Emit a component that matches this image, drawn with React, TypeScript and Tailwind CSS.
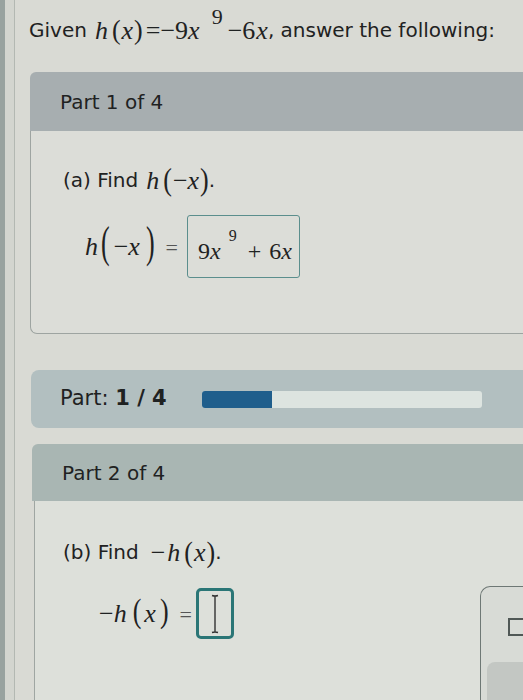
import React from "react";

const sans = { fontFamily: '"DejaVu Sans", Verdana, sans-serif' };
const serif = { fontFamily: '"Liberation Serif", "Times New Roman", serif' };

function V({ children }: { children: React.ReactNode }) {
  return <span className="italic">{children}</span>;
}

function Paren({
  children,
  cls,
  inner = "px-[1px]",
}: {
  children: React.ReactNode;
  cls: string;
  inner?: string;
}) {
  return (
    <span className="inline-flex items-baseline">
      <span className={`inline-block leading-none ${cls}`}>(</span>
      <span className={inner}>{children}</span>
      <span className={`inline-block leading-none ${cls}`}>)</span>
    </span>
  );
}

export default function App() {
  return (
    <div className="w-[523px] h-[700px] overflow-hidden flex bg-[#d9dad4] text-[#1f2222]" style={sans}>
      <div className="w-[5px] flex-none bg-[#98a29f]" />
      <div className="w-[9px] flex-none bg-[#d3d5cf]" />
      <div className="w-[1px] flex-none bg-[#b3b8b2]" />
      <div className="flex-1 flex flex-col min-w-0">
        {/* heading */}
        <div className="h-[72px] flex-none pt-[12px] pl-[14px] flex items-start">
          <div className="h-[36px] flex items-center whitespace-nowrap text-[20px]">
            <span>Given</span>
            <span className="ml-[8px] text-[26px] flex items-baseline" style={serif}>
              <V>h</V>
              <span className="ml-[4px]">
                <Paren cls="scale-y-[1.05]">
                  <V>x</V>
                </Paren>
              </span>
              <span className="ml-[3px]">=</span>
              <span>−9</span>
              <V>x</V>
              <span className="relative -top-[15px] text-[22px] ml-[12px]">9</span>
              <span className="ml-[5px]">−6</span>
              <span className="ml-[1px] italic">x</span>
            </span>
            <span>, answer the following:</span>
          </div>
        </div>

        {/* Part 1 header */}
        <div className="ml-[15px] h-[59px] flex-none bg-[#a7aeb0] rounded-tl-[6px] pl-[30px] flex items-center text-[20px]">
          Part 1 of 4
        </div>

        {/* Part 1 content */}
        <div className="ml-[15px] h-[203px] flex-none border-l border-b border-[#9ea4a1] rounded-bl-[7px] bg-[#dcddd8] pl-[32px]">
          <div className="pt-[34px] h-[64px] flex items-center text-[20px] whitespace-nowrap">
            <span>(a) Find</span>
            <span className="ml-[8px] text-[26px] flex items-baseline" style={serif}>
              <V>h</V>
              <span className="ml-[4px]">
                <Paren cls="scale-y-[1.2] -translate-y-[1px]">
                  −<V>x</V>
                </Paren>
              </span>
            </span>
            <span>.</span>
          </div>
          <div className="mt-[20px] ml-[22px] flex items-center text-[26px] whitespace-nowrap" style={serif}>
            <span className="flex items-baseline">
              <V>h</V>
              <span className="ml-[3px]">
                <Paren cls="scale-y-[1.7] -translate-y-[4px]" inner="pl-[4px] pr-[6px]">
                  −<V>x</V>
                </Paren>
              </span>
              <span className="ml-[11px] text-[22px] text-[#555]">=</span>
            </span>
            <div className="ml-[9px] w-[113px] h-[63px] flex-none border-[1.5px] border-[#5b8e8d] rounded-[3px] flex items-center pl-[10px] pt-[8px] text-[24px]">
              <span className="flex items-baseline">
                <span>9</span>
                <V>x</V>
                <span className="relative -top-[18px] text-[16px] ml-[8px]">9</span>
                <span className="ml-[11px]">+</span>
                <span className="ml-[8px]">6</span>
                <V>x</V>
              </span>
            </div>
          </div>
        </div>

        {/* progress */}
        <div className="mt-[36px] ml-[16px] h-[58px] flex-none bg-[#b2bfc0] rounded-l-[8px] pl-[29px] flex items-center text-[21px] whitespace-nowrap">
          <span className="w-[142px] flex-none">
            Part: <span className="font-bold">1 / 4</span>
          </span>
          <div className="w-[280px] h-[17px] flex-none rounded-[3px] bg-[#dde4e0] flex overflow-hidden">
            <div className="w-[70px] h-full bg-[#1f5e8c]" />
          </div>
        </div>

        {/* Part 2 header */}
        <div className="mt-[16px] ml-[17px] h-[57px] flex-none bg-[#a9b6b3] rounded-tl-[6px] pl-[30px] flex items-center text-[20px]">
          Part 2 of 4
        </div>

        {/* Part 2 content */}
        <div className="ml-[19px] flex-1 border-l border-[#9fa6a2] bg-[#dde0da] flex">
          <div className="flex-1 pl-[28px]">
            <div className="pt-[36px] h-[66px] flex items-center text-[20px] whitespace-nowrap">
              <span>(b) Find</span>
              <span className="ml-[12px] text-[26px] flex items-baseline" style={serif}>
                <span>−</span>
                <span className="ml-[2px] italic">h</span>
                <span className="ml-[4px]">
                  <Paren cls="scale-y-[1.15]">
                    <V>x</V>
                  </Paren>
                </span>
              </span>
              <span>.</span>
            </div>
            <div className="mt-[21px] ml-[36px] flex items-center text-[26px] whitespace-nowrap" style={serif}>
              <span className="flex items-baseline">
                <span>−</span>
                <V>h</V>
                <span className="ml-[6px]">
                  <Paren cls="scale-y-[1.3] -translate-y-[2px]" inner="pl-[3px] pr-[4px]">
                    <V>x</V>
                  </Paren>
                </span>
                <span className="ml-[11px] text-[22px] text-[#555]">=</span>
              </span>
              <div className="ml-[4px] w-[38px] h-[51px] flex-none border-[3px] border-[#2a7676] rounded-[5px] flex items-center justify-center">
                <svg width="10" height="40" viewBox="0 0 10 40">
                  <path d="M2 1.5 Q5 2.5 8 1.5 M5 2 V38 M2 38.5 Q5 37.5 8 38.5" stroke="#333" strokeWidth="1.4" fill="none" />
                </svg>
              </div>
            </div>
          </div>
          <div className="w-[43px] flex-none mt-[85px] border-l-[1.5px] border-t-[1.5px] border-[#6e7875] rounded-tl-[10px] bg-[#d8dbd6] flex flex-col">
            <div className="ml-[27px] mt-[31px] w-[20px] h-[18px] border-2 border-[#505856] flex-none" />
            <div className="ml-[6px] mt-[26px] flex-1 bg-[#c3c7c3] rounded-tl-[8px]" />
          </div>
        </div>
      </div>
    </div>
  );
}
